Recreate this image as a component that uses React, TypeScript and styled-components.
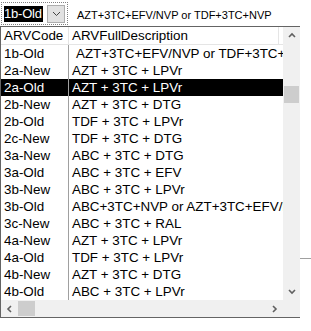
import React from 'react'
import styled, { createGlobalStyle } from 'styled-components'

const GlobalStyle = createGlobalStyle`
  html, body {
    margin: 0;
    padding: 0;
    background: #ffffff;
  }
  body {
    font-family: "Liberation Sans", Arial, sans-serif;
    color: #000;
  }
`

const rows: [string, string][] = [
  ['1b-Old', 'AZT+3TC+EFV/NVP or TDF+3TC+NVP'],
  ['2a-New', 'AZT + 3TC + LPVr'],
  ['2a-Old', 'AZT + 3TC + LPVr'],
  ['2b-New', 'AZT + 3TC + DTG'],
  ['2b-Old', 'TDF + 3TC + LPVr'],
  ['2c-New', 'TDF + 3TC + DTG'],
  ['3a-New', 'ABC + 3TC + DTG'],
  ['3a-Old', 'ABC + 3TC + EFV'],
  ['3b-New', 'ABC + 3TC + LPVr'],
  ['3b-Old', 'ABC+3TC+NVP or AZT+3TC+EFV/NVP'],
  ['3c-New', 'ABC + 3TC + RAL'],
  ['4a-New', 'AZT + 3TC + LPVr'],
  ['4a-Old', 'TDF + 3TC + LPVr'],
  ['4b-New', 'AZT + 3TC + DTG'],
  ['4b-Old', 'ABC + 3TC + LPVr'],
]

const Chevron = ({ dir }: { dir: 'up' | 'down' | 'left' | 'right' }) => {
  const pts = {
    down: '1,2 4,5 7,2',
    up: '1,5 4,2 7,5',
    left: '5,1 2,4 5,7',
    right: '2,1 5,4 2,7',
  }[dir]
  return (
    <svg width="8" height="8" viewBox="0 0 8 8">
      <polyline points={pts} fill="none" stroke="#606060" strokeWidth="1.6" />
    </svg>
  )
}

function App() {
  return (
    <Page>
      <GlobalStyle />
      <ComboRow>
        <ComboBox>
          <Selected>1b-Old</Selected>
          <DropButton>
            <svg width="9" height="6" viewBox="0 0 9 6">
              <polyline points="1,1 4.5,4.5 8,1" fill="none" stroke="#444" strokeWidth="1" />
            </svg>
          </DropButton>
        </ComboBox>
        <ComboDesc>AZT+3TC+EFV/NVP or TDF+3TC+NVP</ComboDesc>
      </ComboRow>
      <Lower>
        <ListPanel>
          <Viewport>
            <HeaderRow>
              <CodeCell $header>ARVCode</CodeCell>
              <DescCell $header>ARVFullDescription</DescCell>
            </HeaderRow>
            {rows.map(([code, desc], i) => (
              <Row key={code} $active={code === '2a-Old'}>
                <CodeCell>{code}</CodeCell>
                <DescCell $indent={i === 0 ? 7 : 3}>{desc}</DescCell>
              </Row>
            ))}
          </Viewport>
          <VScroll>
            <ArrowBox>
              <Chevron dir="up" />
            </ArrowBox>
            <Track>
              <VThumb />
            </Track>
            <ArrowBox>
              <Chevron dir="down" />
            </ArrowBox>
          </VScroll>
          <HScroll>
            <ArrowBox>
              <Chevron dir="left" />
            </ArrowBox>
            <HThumb />
            <HTrack />
            <ArrowBox>
              <Chevron dir="right" />
            </ArrowBox>
          </HScroll>
          <Corner />
        </ListPanel>
        <SideRule />
      </Lower>
    </Page>
  )
}

export default App

const Page = styled.div`
  width: 311px;
  height: 331px;
  display: flex;
  flex-direction: column;
  font-size: 13.4px;
`

const ComboRow = styled.div`
  display: flex;
  align-items: center;
  height: 26px;
  padding-left: 1px;
`

const ComboBox = styled.div`
  box-sizing: border-box;
  width: 67px;
  height: 23px;
  margin-top: 1px;
  border: 1px dotted #808080;
  display: flex;
  align-items: center;
  justify-content: space-between;
  padding: 0 2px 0 2px;
`

const Selected = styled.span`
  background: #000;
  color: #fff;
  font-size: 13px;
  line-height: 16px;
  height: 16px;
  padding: 0 1px 0 0;
  letter-spacing: -0.2px;
`

const DropButton = styled.div`
  box-sizing: border-box;
  width: 18px;
  height: 18px;
  background: #e1e1e1;
  border: 1px solid #adadad;
  display: flex;
  align-items: center;
  justify-content: center;
`

const ComboDesc = styled.span`
  font-size: 11px;
  margin-left: 9px;
  padding-top: 3px;
`

const Lower = styled.div`
  display: flex;
  align-items: flex-start;
`

const ListPanel = styled.div`
  box-sizing: border-box;
  width: 300px;
  height: 292px;
  border: 1px solid #646464;
  display: grid;
  grid-template-columns: 282px 17px;
  grid-template-rows: 273px 17px;
  background: #fff;
`

const Viewport = styled.div`
  overflow: hidden;
  display: flex;
  flex-direction: column;
`

const HeaderRow = styled.div`
  display: flex;
  height: 18px;
  box-sizing: border-box;
  border-bottom: 1px solid #e5e5e5;
  line-height: 17px;
  flex-shrink: 0;
`

const Row = styled.div<{ $active?: boolean }>`
  display: flex;
  height: 17px;
  line-height: 17px;
  flex-shrink: 0;
  background: ${(p) => (p.$active ? '#000' : 'transparent')};
  color: ${(p) => (p.$active ? '#fff' : '#000')};
`

const CodeCell = styled.div<{ $header?: boolean }>`
  box-sizing: border-box;
  width: 68px;
  flex-shrink: 0;
  padding-left: 3px;
  border-right: 1px solid ${(p) => (p.$header ? '#e5e5e5' : '#a0a0a0')};
  white-space: nowrap;
`

const DescCell = styled.div<{ $header?: boolean; $indent?: number }>`
  padding-left: ${(p) => p.$indent ?? 3}px;
  white-space: nowrap;
  flex-shrink: 0;
  ${(p) => (p.$header ? 'width: 206px; border-right: 1px solid #e5e5e5;' : '')}
`

const VScroll = styled.div`
  background: #f0f0f0;
  display: flex;
  flex-direction: column;
`

const ArrowBox = styled.div`
  width: 17px;
  height: 17px;
  flex-shrink: 0;
  display: flex;
  align-items: center;
  justify-content: center;
`

const Track = styled.div`
  flex: 1;
  display: flex;
  flex-direction: column;
  align-items: center;
`

const VThumb = styled.div`
  width: 15px;
  height: 17px;
  margin-top: 42px;
  background: #cdcdcd;
`

const HScroll = styled.div`
  background: #f0f0f0;
  display: flex;
  align-items: center;
`

const HThumb = styled.div`
  width: 17px;
  height: 15px;
  background: #cdcdcd;
`

const HTrack = styled.div`
  flex: 1;
`

const Corner = styled.div`
  background: #f0f0f0;
`

const SideRule = styled.div`
  width: 11px;
  height: 1px;
  margin-top: 232px;
  background: #a0a0a0;
`
